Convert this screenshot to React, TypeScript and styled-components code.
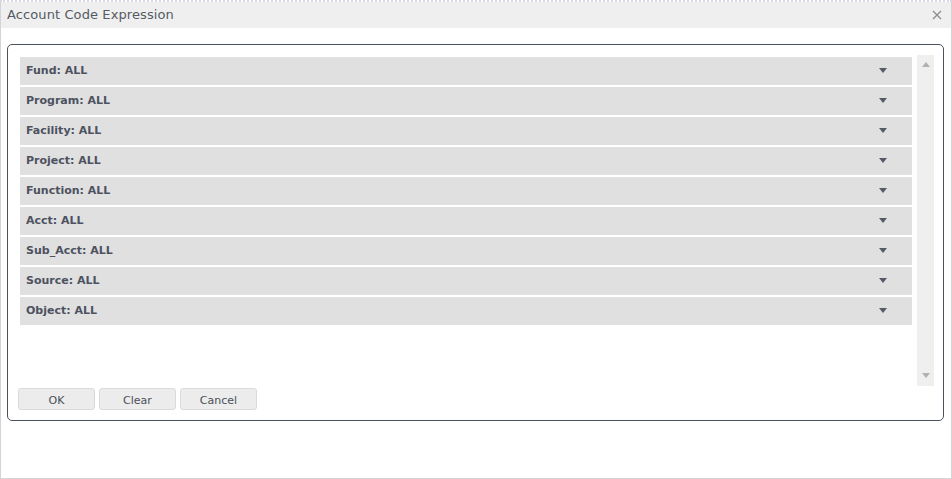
import React from "react";
import styled, { createGlobalStyle } from "styled-components";

const Global = createGlobalStyle`
  html, body { margin: 0; padding: 0; background: #ffffff; }
  body { font-family: Verdana, "DejaVu Sans", sans-serif; }
  * { box-sizing: border-box; }
`;

const Window = styled.div`
  width: 952px;
  height: 479px;
  display: flex;
  flex-direction: column;
  border: 1px solid #d4d4d4;
  border-top: 2px dotted #d9d9e6;
  background: #ffffff;
`;

const TitleBar = styled.div`
  height: 26px;
  flex: none;
  display: flex;
  align-items: center;
  justify-content: space-between;
  padding: 0 9px 2px 6px;
  background: #efefef;
`;

const Title = styled.span`
  font-size: 13px;
  color: #555a63;
  letter-spacing: 0.1px;
`;

const Close = styled.span`
  display: flex;
  width: 10px;
  height: 10px;
  margin-top: 2px;
  color: #8a8a8a;
`;

const Body = styled.div`
  flex: 1;
  padding: 16px 7px 0 6px;
`;

const Panel = styled.div`
  border: 1px solid #4c525b;
  border-radius: 5px;
  padding: 10px 9px 10px 10px;
  display: flex;
  flex-direction: column;
  gap: 2px;
`;

const ScrollArea = styled.div`
  height: 331px;
  display: flex;
  gap: 5px;
`;

const List = styled.div`
  flex: 1;
  padding: 2px 0 0 2px;
  display: flex;
  flex-direction: column;
  gap: 2px;
`;

const Row = styled.div`
  height: 28px;
  display: flex;
  align-items: center;
  justify-content: space-between;
  padding: 0 25px 2px 6px;
  background: #e0e0e0;
  font-size: 11px;
  font-weight: bold;
  color: #4d5260;
`;

const Caret = styled.span<{ $color: string; $up?: boolean }>`
  width: 0;
  height: 0;
  border-left: 4px solid transparent;
  border-right: 4px solid transparent;
  ${(p) =>
    p.$up
      ? `border-bottom: 5px solid ${p.$color};`
      : `border-top: 5px solid ${p.$color};`}
`;

const Scrollbar = styled.div`
  width: 17px;
  background: #efefef;
  display: flex;
  flex-direction: column;
  justify-content: space-between;
  align-items: center;
  padding: 7px 0 8px;
`;

const Buttons = styled.div`
  display: flex;
  gap: 4px;
`;

const Button = styled.button`
  width: 77px;
  height: 22px;
  border: 1px solid #dadada;
  border-radius: 3px;
  background: #ececec;
  color: #4a4f58;
  font-family: Verdana, "DejaVu Sans", sans-serif;
  font-size: 11px;
  padding: 2px 0 0;
`;

const fields = [
  "Fund",
  "Program",
  "Facility",
  "Project",
  "Function",
  "Acct",
  "Sub_Acct",
  "Source",
  "Object",
];

export default function App() {
  return (
    <>
      <Global />
      <Window>
        <TitleBar>
          <Title>Account Code Expression</Title>
          <Close>
            <svg width="10" height="10" viewBox="0 0 10 10">
              <path d="M1 1L9 9M9 1L1 9" stroke="currentColor" strokeWidth="1.2" />
            </svg>
          </Close>
        </TitleBar>
        <Body>
          <Panel>
            <ScrollArea>
              <List>
                {fields.map((f) => (
                  <Row key={f}>
                    <span>{f}: ALL</span>
                    <Caret $color="#555a66" />
                  </Row>
                ))}
              </List>
              <Scrollbar>
                <Caret $color="#b0b0b0" $up />
                <Caret $color="#b0b0b0" />
              </Scrollbar>
            </ScrollArea>
            <Buttons>
              <Button>OK</Button>
              <Button>Clear</Button>
              <Button>Cancel</Button>
            </Buttons>
          </Panel>
        </Body>
      </Window>
    </>
  );
}
